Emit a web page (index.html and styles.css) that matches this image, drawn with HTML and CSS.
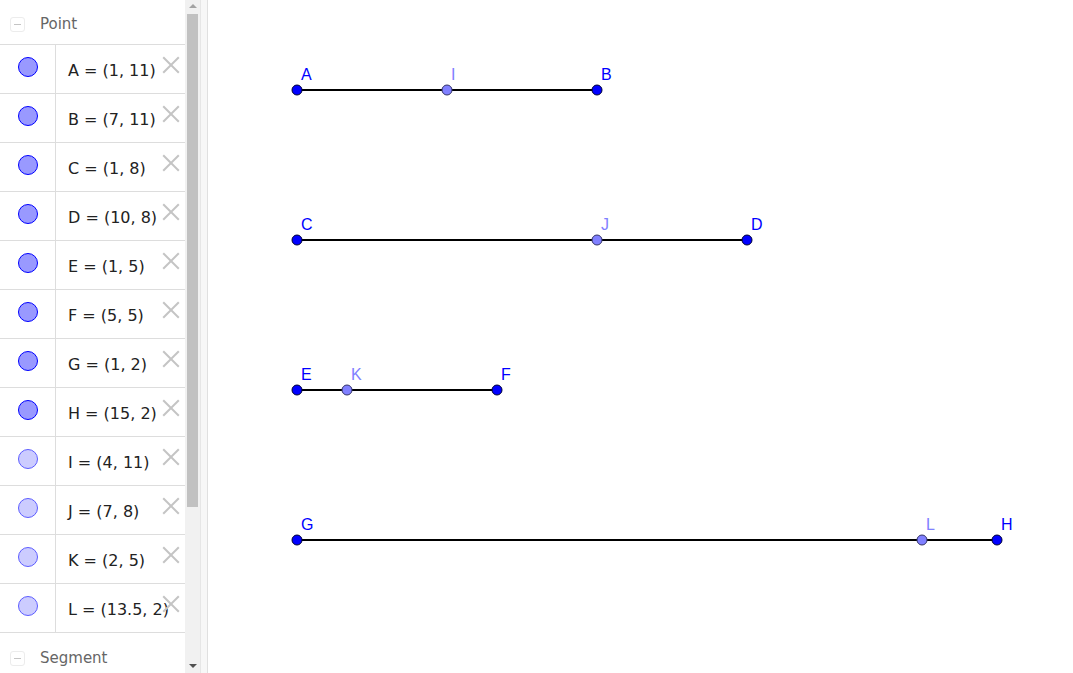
FILE: index.html
```html
<!DOCTYPE html>
<html>
<head>
<meta charset="utf-8">
<link rel="stylesheet" href="styles.css">
</head>
<body>
<div class="app">
  <aside class="sidebar">
    <div class="list">
      <div class="group-head"><span class="minus"></span><span class="group-name">Point</span></div>
      <div class="row"><div class="mark"><span class="dot"></span></div><div class="expr">A = (1, 11)</div><span class="close"></span></div>
      <div class="row"><div class="mark"><span class="dot"></span></div><div class="expr">B = (7, 11)</div><span class="close"></span></div>
      <div class="row"><div class="mark"><span class="dot"></span></div><div class="expr">C = (1, 8)</div><span class="close"></span></div>
      <div class="row"><div class="mark"><span class="dot"></span></div><div class="expr">D = (10, 8)</div><span class="close"></span></div>
      <div class="row"><div class="mark"><span class="dot"></span></div><div class="expr">E = (1, 5)</div><span class="close"></span></div>
      <div class="row"><div class="mark"><span class="dot"></span></div><div class="expr">F = (5, 5)</div><span class="close"></span></div>
      <div class="row"><div class="mark"><span class="dot"></span></div><div class="expr">G = (1, 2)</div><span class="close"></span></div>
      <div class="row"><div class="mark"><span class="dot"></span></div><div class="expr">H = (15, 2)</div><span class="close"></span></div>
      <div class="row"><div class="mark"><span class="dot light"></span></div><div class="expr">I = (4, 11)</div><span class="close"></span></div>
      <div class="row"><div class="mark"><span class="dot light"></span></div><div class="expr">J = (7, 8)</div><span class="close"></span></div>
      <div class="row"><div class="mark"><span class="dot light"></span></div><div class="expr">K = (2, 5)</div><span class="close"></span></div>
      <div class="row"><div class="mark"><span class="dot light"></span></div><div class="expr">L = (13.5, 2)</div><span class="close"></span></div>
      <div class="group-head seg"><span class="minus"></span><span class="group-name">Segment</span></div>
    </div>
    <div class="scrollbar">
      <div class="arrow up"></div>
      <div class="thumb"></div>
      <div class="track"></div>
      <div class="arrow down"></div>
    </div>
  </aside>
  <div class="splitter"></div>
  <main class="canvas">
    <svg class="graphics" width="865" height="673" viewBox="208 0 865 673">
      <g class="seg">
        <line x1="297" y1="90" x2="597" y2="90"/>
        <line x1="297" y1="240" x2="747" y2="240"/>
        <line x1="297" y1="390" x2="497" y2="390"/>
        <line x1="297" y1="540" x2="997" y2="540"/>
      </g>
      <g class="pt">
        <circle cx="297" cy="90" r="5"/>
        <circle cx="597" cy="90" r="5"/>
        <circle cx="297" cy="240" r="5"/>
        <circle cx="747" cy="240" r="5"/>
        <circle cx="297" cy="390" r="5"/>
        <circle cx="497" cy="390" r="5"/>
        <circle cx="297" cy="540" r="5"/>
        <circle cx="997" cy="540" r="5"/>
      </g>
      <g class="pt-light">
        <circle cx="447" cy="90" r="5"/>
        <circle cx="597" cy="240" r="5"/>
        <circle cx="347" cy="390" r="5"/>
        <circle cx="922" cy="540" r="5"/>
      </g>
      <g class="lbl">
        <text x="301" y="80">A</text>
        <text x="601" y="80">B</text>
        <text x="301" y="230">C</text>
        <text x="751" y="230">D</text>
        <text x="301" y="380">E</text>
        <text x="501" y="380">F</text>
        <text x="301" y="530">G</text>
        <text x="1001" y="530">H</text>
      </g>
      <g class="lbl light">
        <text x="451" y="80">I</text>
        <text x="601" y="230">J</text>
        <text x="351" y="380">K</text>
        <text x="926" y="530">L</text>
      </g>
    </svg>
  </main>
</div>
</body>
</html>
```

FILE: styles.css
```css
html, body {
  margin: 0;
  padding: 0;
  background: #fff;
  overflow: hidden;
}
.app {
  display: flex;
  width: 1073px;
  height: 673px;
  font-family: "DejaVu Sans", sans-serif;
}
.sidebar {
  width: 200px;
  height: 673px;
  display: flex;
  flex-shrink: 0;
}
.list {
  width: 185px;
  height: 673px;
  overflow: hidden;
}
.group-head {
  height: 44px;
  display: flex;
  align-items: center;
  box-sizing: border-box;
  padding-top: 4px;
}
.group-head.seg {
  height: 50px;
  padding-top: 0;
}
.minus {
  width: 15px;
  height: 15px;
  margin-left: 10px;
  margin-right: 15px;
  border: 1px solid #ececec;
  border-radius: 3px;
  position: relative;
  box-sizing: border-box;
}
.minus::after {
  content: "";
  position: absolute;
  left: 3px;
  right: 3px;
  top: 6px;
  height: 1px;
  background: #c4c4c4;
}
.group-name {
  font-size: 15px;
  color: #666;
  font-family: "DejaVu Sans", sans-serif;
}
.row {
  height: 49px;
  border-top: 1px solid #ddd;
  box-sizing: border-box;
  display: flex;
  align-items: stretch;
  position: relative;
}
.row:nth-last-child(2) {
  border-bottom: 1px solid #ddd;
  height: 50px;
}
.mark {
  width: 56px;
  border-right: 1px solid #ddd;
  display: flex;
  align-items: center;
  justify-content: center;
  box-sizing: border-box;
  padding-bottom: 4px;
}
.dot {
  width: 20px;
  height: 20px;
  border-radius: 50%;
  background: #9999ff;
  border: 1px solid #0000ff;
  box-sizing: border-box;
  margin-left: 1px;
}
.dot.light {
  background: #ccccff;
  border-color: #5c5cff;
}
.expr {
  padding-left: 12px;
  display: flex;
  align-items: center;
  font-size: 16px;
  color: #222;
  white-space: nowrap;
  padding-top: 2px;
}
.close {
  position: absolute;
  left: 163px;
  top: 12px;
  width: 16px;
  height: 16px;
}
.close::before, .close::after {
  content: "";
  position: absolute;
  left: -3px;
  top: 7px;
  width: 22px;
  height: 2px;
  background: #c4c4c4;
  transform: rotate(45deg);
}
.close::after {
  transform: rotate(-45deg);
}
.scrollbar {
  width: 15px;
  height: 673px;
  background: #f1f1f1;
  display: flex;
  flex-direction: column;
  align-items: center;
}
.arrow {
  height: 14px;
  width: 15px;
  position: relative;
}
.arrow::after {
  content: "";
  position: absolute;
  left: 4px;
  width: 0;
  height: 0;
  border-left: 4px solid transparent;
  border-right: 4px solid transparent;
}
.arrow.up::after {
  top: 4px;
  border-bottom: 4px solid #a3a3a3;
}
.arrow.down::after {
  top: 5px;
  border-top: 4px solid #505050;
}
.thumb {
  width: 11px;
  height: 493px;
  background: #c1c1c1;
}
.track {
  flex: 1;
}
.splitter {
  width: 8px;
  height: 673px;
  background: #f7f7f7;
  border-left: 1px solid #e6e6e6;
  border-right: 1px solid #e0e0e0;
  box-sizing: border-box;
  flex-shrink: 0;
}
.canvas {
  flex: 1;
  height: 673px;
}
.graphics {
  display: block;
}
.seg line {
  stroke: #000;
  stroke-width: 2;
}
.pt circle {
  fill: #0000ff;
  stroke: #000033;
  stroke-width: 1;
}
.pt-light circle {
  fill: #8080ff;
  stroke: #333366;
  stroke-width: 1;
}
.lbl text {
  font-family: "Liberation Sans", Arial, sans-serif;
  font-size: 16px;
  fill: #0000ff;
}
.lbl.light text {
  fill: #8080ff;
}
```
